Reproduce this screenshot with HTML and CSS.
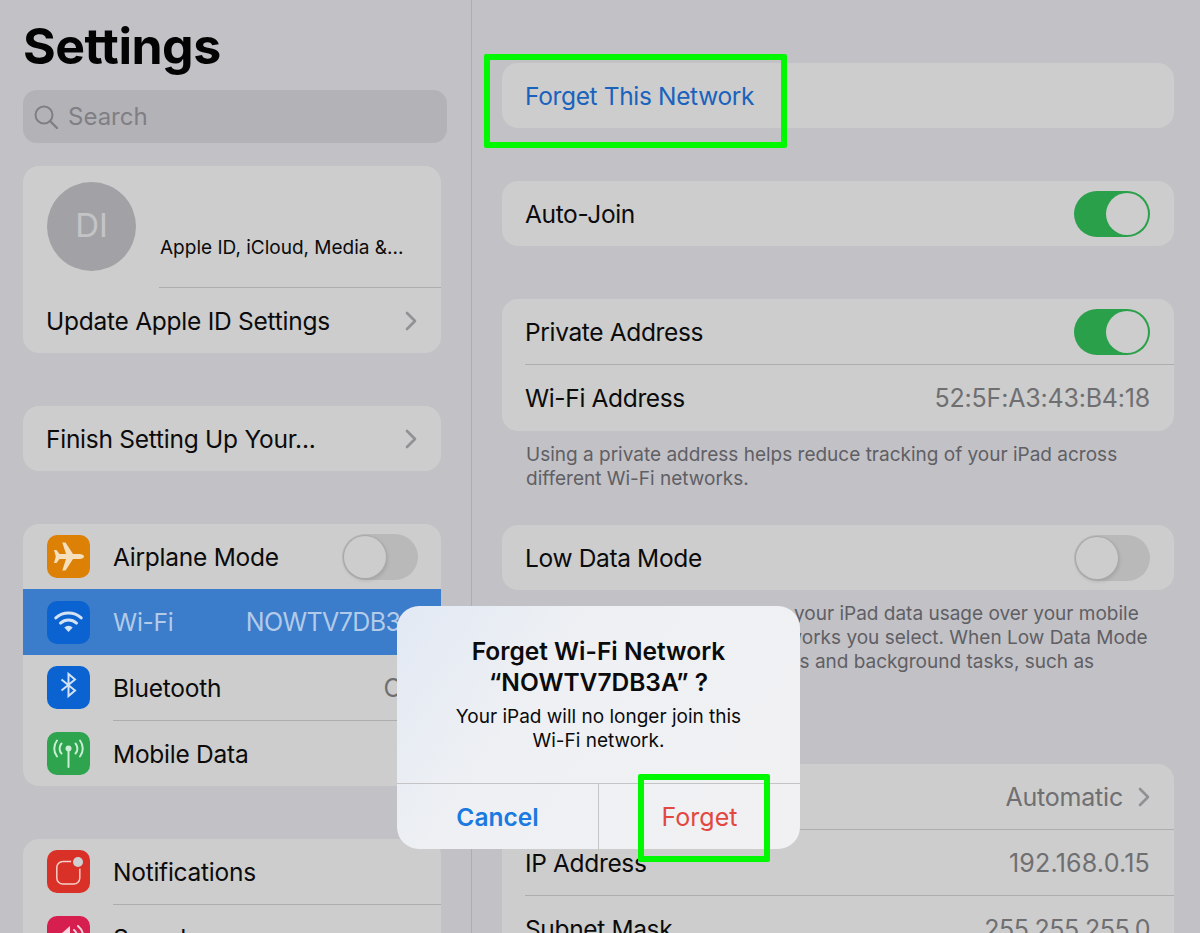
FILE: index.html
```html
<!DOCTYPE html>
<html lang="en">

<head>
    <meta charset="UTF-8">
    <title>Settings</title>
    <link rel="stylesheet" href="styles.css">
</head>

<body>
    <div class="screen">
        <!-- left column -->
        <div class="sidebar">
            <div class="title">Settings</div>
            <div class="search">
                <svg class="searchIcon" viewBox="0 0 24 24" width="24" height="24" fill="none" stroke="#7f7f84" stroke-width="2">
                    <circle cx="10" cy="10" r="8.5"></circle>
                    <path d="M16 16l7 7" stroke-linecap="round" stroke-width="2.4"></path>
                </svg>
                <span>Search</span>
            </div>

            <div class="group account">
                <div class="profile">
                    <div class="avatar">DI</div>
                    <div class="profileText">Apple ID, iCloud, Media &amp;...</div>
                </div>
                <div class="row">
                    <div class="rowMain">
                        <span class="label">Update Apple ID Settings</span>
                        <svg class="chevron" viewBox="0 0 12 20" width="12" height="20"><path d="M2 2l8 8-8 8"></path></svg>
                    </div>
                </div>
            </div>

            <div class="group">
                <div class="row">
                    <div class="rowMain">
                        <span class="label">Finish Setting Up Your...</span>
                        <svg class="chevron" viewBox="0 0 12 20" width="12" height="20"><path d="M2 2l8 8-8 8"></path></svg>
                    </div>
                </div>
            </div>

            <div class="group">
                <div class="row iconRow">
                    <div class="icon orange">
                        <svg viewBox="0 0 43 43" width="43" height="43"><path fill="#f6dfbd" d="M37 21.5c0-1.5-2-2.5-4.5-2.5H26L18.5 7.500h-3.200L19 19h-6.500L9.500 15H7l1.800 6.500L7 28h2.500l3-4H19l-3.700 11.500h3.200L26 24h6.500c2.500 0 4.500-1 4.500-2.500z"></path></svg>
                    </div>
                    <div class="rowMain">
                        <span class="label">Airplane Mode</span>
                        <span class="toggle"></span>
                    </div>
                </div>
                <div class="row iconRow selected">
                    <div class="icon blue">
                        <svg viewBox="0 0 43 43" width="43" height="43" fill="none" stroke="#d3e2f5" stroke-width="3" stroke-linecap="round">
                            <path d="M8.800 16.900A19 19 0 0 1 34.200 16.900"></path>
                            <path d="M13.500 22.100A12 12 0 0 1 29.500 22.100"></path>
                            <path d="M21.500 31L17.300 26.500A6 6 0 0 1 25.700 26.500Z" fill="#d3e2f5" stroke="none"></path>
                        </svg>
                    </div>
                    <div class="rowMain">
                        <span class="label">Wi-Fi</span>
                        <span class="value">NOWTV7DB3A</span>
                    </div>
                </div>
                <div class="row iconRow">
                    <div class="icon blue">
                        <svg viewBox="0 0 43 43" width="43" height="43" fill="none" stroke="#d3e2f5" stroke-width="2">
                            <path d="M14.500 13.500L28 24.500L21.500 30V8L28 13.500L14.500 24.500"></path>
                        </svg>
                    </div>
                    <div class="rowMain">
                        <span class="label">Bluetooth</span>
                        <span class="value">On</span>
                    </div>
                </div>
                <div class="row iconRow tall">
                    <div class="icon green">
                        <svg viewBox="0 0 43 43" width="43" height="43" fill="none" stroke="#c9eed3" stroke-width="2" stroke-linecap="round">
                            <circle cx="21.500" cy="16.500" r="3" fill="#c9eed3" stroke="none"></circle>
                            <path d="M21.500 18V35"></path>
                            <path d="M14.500 11.500a7.500 7.500 0 0 0 0 10"></path>
                            <path d="M28.500 11.500a7.500 7.500 0 0 1 0 10"></path>
                            <path d="M10 8.500a13 13 0 0 0 0 16"></path>
                            <path d="M33 8.500a13 13 0 0 1 0 16"></path>
                        </svg>
                    </div>
                    <div class="rowMain lined">
                        <span class="label">Mobile Data</span>
                    </div>
                </div>
            </div>

            <div class="group">
                <div class="row iconRow">
                    <div class="icon red">
                        <svg viewBox="0 0 43 43" width="43" height="43" fill="none">
                            <rect x="9.800" y="11.500" width="23" height="22.500" rx="6" stroke="#f8cfc9" stroke-width="1.500"></rect>
                            <circle cx="31" cy="12" r="7" fill="#d93027"></circle>
                            <circle cx="31" cy="12" r="5" fill="#cfd0d2"></circle>
                        </svg>
                    </div>
                    <div class="rowMain">
                        <span class="label">Notifications</span>
                    </div>
                </div>
                <div class="row iconRow tall">
                    <div class="icon pink">
                        <svg viewBox="0 0 43 43" width="43" height="43" fill="none">
                            <path d="M9 17h6l8-7v23l-8-7H9z" fill="#f5d5de"></path>
                            <path d="M27 14a10 10 0 0 1 0 15M31 10a15 15 0 0 1 0 23" stroke="#f5d5de" stroke-width="2" stroke-linecap="round"></path>
                        </svg>
                    </div>
                    <div class="rowMain lined">
                        <span class="label">Sounds</span>
                    </div>
                </div>
            </div>
        </div>

        <!-- right column -->
        <div class="detail">
            <div class="group first">
                <div class="row">
                    <div class="rowMain"><span class="label link">Forget This Network</span></div>
                </div>
            </div>

            <div class="group">
                <div class="row">
                    <div class="rowMain">
                        <span class="label">Auto-Join</span>
                        <span class="toggle on"></span>
                    </div>
                </div>
            </div>

            <div class="group">
                <div class="row">
                    <div class="rowMain">
                        <span class="label">Private Address</span>
                        <span class="toggle on"></span>
                    </div>
                </div>
                <div class="row tallest">
                    <div class="rowMain lined">
                        <span class="label">Wi-Fi Address</span>
                        <span class="value">52:5F:A3:43:B4:18</span>
                    </div>
                </div>
            </div>
            <div class="note">Using a private address helps reduce tracking of your iPad across<br>different Wi-Fi networks.</div>

            <div class="group lowData">
                <div class="row">
                    <div class="rowMain">
                        <span class="label">Low Data Mode</span>
                        <span class="toggle"></span>
                    </div>
                </div>
            </div>
            <div class="note">Low Data Mode helps reduce your iPad data usage over your mobile<br>network or specific Wi-Fi networks you select. When Low Data Mode<br>is turned on, automatic updates and background tasks, such as<br>Photos syncing, are paused.</div>

            <div class="group ipGroup">
                <div class="row">
                    <div class="rowMain">
                        <span class="label">Configure IP</span>
                        <span class="value">Automatic</span>
                        <svg class="chevron" viewBox="0 0 12 20" width="12" height="20"><path d="M2 2l8 8-8 8"></path></svg>
                    </div>
                </div>
                <div class="row tall">
                    <div class="rowMain lined">
                        <span class="label">IP Address</span>
                        <span class="value ipValue">192.168.0.15</span>
                    </div>
                </div>
                <div class="row tall">
                    <div class="rowMain lined">
                        <span class="label">Subnet Mask</span>
                        <span class="value maskValue">255.255.255.0</span>
                    </div>
                </div>
            </div>
        </div>

        <!-- alert -->
        <div class="dialog">
            <div class="dialogText">
                <div class="dialogTitle">Forget Wi-Fi Network<br>“NOWTV7DB3A” ?</div>
                <div class="dialogBody">Your iPad will no longer join this<br>Wi-Fi network.</div>
            </div>
            <div class="dialogButtons">
                <div class="dialogBtn cancel">Cancel</div>
                <div class="dialogBtn forget">Forget</div>
            </div>
        </div>

        <!-- green marks on top of the screenshot -->
        <div class="mark markNetwork"></div>
        <div class="mark markForget"></div>
    </div>
</body>

</html>
```

FILE: styles.css
```css
* {
    margin: 0;
    padding: 0;
    box-sizing: border-box;
}

html,
body {
    height: 100%;
    overflow: hidden;
}

body {
    font-family: Inter, "Liberation Sans", sans-serif;
    color: #0b0b0c;
    background: #c2c1c6;
}

.screen {
    position: relative;
    display: flex;
    width: 1200px;
    height: 933px;
    overflow: hidden;
}

.sidebar {
    flex: none;
    width: 472px;
    padding-left: 23px;
    border-right: 1px solid #aeadb2;
}

.title {
    height: 90px;
    padding-top: 16px;
    font-size: 50px;
    line-height: 60px;
    font-weight: 700;
    letter-spacing: -0.5px;
    color: #030304;
}

.search {
    display: flex;
    align-items: center;
    gap: 10px;
    width: 424px;
    height: 53px;
    padding-left: 11px;
    font-size: 24px;
    color: #7f7f84;
    background: #b3b2b7;
    border-radius: 14px;
}

.group {
    margin-top: 53px;
    background: #cdcdcd;
    border-radius: 16px;
    overflow: hidden;
}

.sidebar .group {
    width: 418px;
}

.sidebar .account {
    margin-top: 23px;
}

.row {
    display: flex;
    height: 65px;
    padding-left: 23px;
}

.row.tall {
    height: 66px;
}

.row.tallest {
    height: 67px;
}

.iconRow {
    align-items: center;
    padding-left: 24px;
}

.rowMain {
    flex: 1;
    display: flex;
    align-items: center;
    height: 100%;
    min-width: 0;
    padding-right: 24px;
}

.lined {
    border-top: 1px solid #adadad;
}

.label {
    flex: 1;
    font-size: 24.5px;
    letter-spacing: -0.35px;
    white-space: nowrap;
}

.sidebar .label {
    letter-spacing: -0.25px;
}

.value {
    font-size: 25px;
    letter-spacing: -0.2px;
    color: #6f6f72;
    white-space: nowrap;
}

.ipValue {
    letter-spacing: 0.2px;
}

.maskValue {
    letter-spacing: -0.45px;
}

.chevron {
    flex: none;
    margin-left: 15px;
    fill: none;
    stroke: #909095;
    stroke-width: 2.6;
    stroke-linecap: round;
    stroke-linejoin: round;
}

/* profile row */
.profile {
    display: flex;
    height: 122px;
    padding: 16px 0 0 24px;
}

.avatar {
    flex: none;
    width: 89px;
    height: 89px;
    font-size: 33px;
    line-height: 87px;
    text-align: center;
    color: #c4c4c6;
    background: #a2a2a6;
    border-radius: 50%;
}

.profileText {
    flex: 1;
    margin-left: 23px;
    padding: 54px 0 0 1px;
    font-size: 19px;
    line-height: 24px;
    white-space: nowrap;
    border-bottom: 1px solid #adadad;
}

/* icon rows */
.icon {
    flex: none;
    width: 43px;
    height: 43px;
    margin-right: 23px;
    border-radius: 10px;
    overflow: hidden;
}

.icon svg {
    display: block;
}

.orange {
    background: #dc8006;
}

.blue {
    background: #0a63d0;
}

.green {
    background: #2ea44f;
}

.red {
    background: #d93027;
}

.pink {
    background: #d61f4e;
}

.selected {
    height: 66px;
    color: #b3cbe8;
    background: #3b7ccb;
}

.selected .value {
    letter-spacing: -0.6px;
    color: #b3cbe8;
}

/* toggles */
.toggle {
    flex: none;
    position: relative;
    width: 76px;
    height: 46px;
    background: #b9b9b9;
    border-radius: 23px;
}

.toggle::after {
    content: "";
    position: absolute;
    top: 2px;
    left: 2px;
    width: 42px;
    height: 42px;
    background: #cdcdcd;
    border-radius: 50%;
    box-shadow: 0 0 0 1px #a9a9a9, 1px 2px 4px rgba(0, 0, 0, 0.15);
}

.toggle.on {
    background: #2aa04a;
}

.toggle.on::after {
    left: 32px;
    box-shadow: none;
}

.sidebar .toggle {
    margin-right: -1px;
}

/* right column */
.detail {
    flex: none;
    width: 728px;
    padding: 10px 26px 0 30px;
}

.note {
    margin: 12px 0 0 24px;
    font-size: 19px;
    line-height: 24px;
    color: #5f5f64;
    white-space: nowrap;
}

.link {
    color: #1a63bd;
}

.lowData {
    margin-top: 34px;
}

.ipGroup {
    margin-top: 66px;
}

/* alert */
.dialog {
    position: absolute;
    left: 397px;
    top: 606px;
    width: 403px;
    height: 243px;
    display: flex;
    flex-direction: column;
    background: linear-gradient(125deg, #e2e9f4 0%, #eef0f3 35%, #f1f1f3 100%);
    border-radius: 22px;
    overflow: hidden;
}

.dialogText {
    flex: 1;
    padding-top: 30px;
    text-align: center;
}

.dialogTitle {
    font-size: 24.5px;
    line-height: 31px;
    font-weight: 600;
}

.dialogBody {
    margin-top: 7px;
    font-size: 19px;
    line-height: 24px;
}

.dialogButtons {
    display: flex;
    height: 66px;
    border-top: 1px solid #c4c4c6;
}

.dialogBtn {
    flex: 1;
    font-size: 25px;
    line-height: 66px;
    text-align: center;
}

.cancel {
    font-size: 24.5px;
    font-weight: 600;
    color: #1a7ae0;
    border-right: 1px solid #c4c4c6;
}

.forget {
    color: #e2483f;
}

/* green marks */
.mark {
    position: absolute;
    border: 6px solid #00f800;
    border-radius: 2px;
}

.markNetwork {
    left: 484px;
    top: 54px;
    width: 303px;
    height: 94px;
}

.markForget {
    left: 638px;
    top: 774px;
    width: 132px;
    height: 88px;
}
```
